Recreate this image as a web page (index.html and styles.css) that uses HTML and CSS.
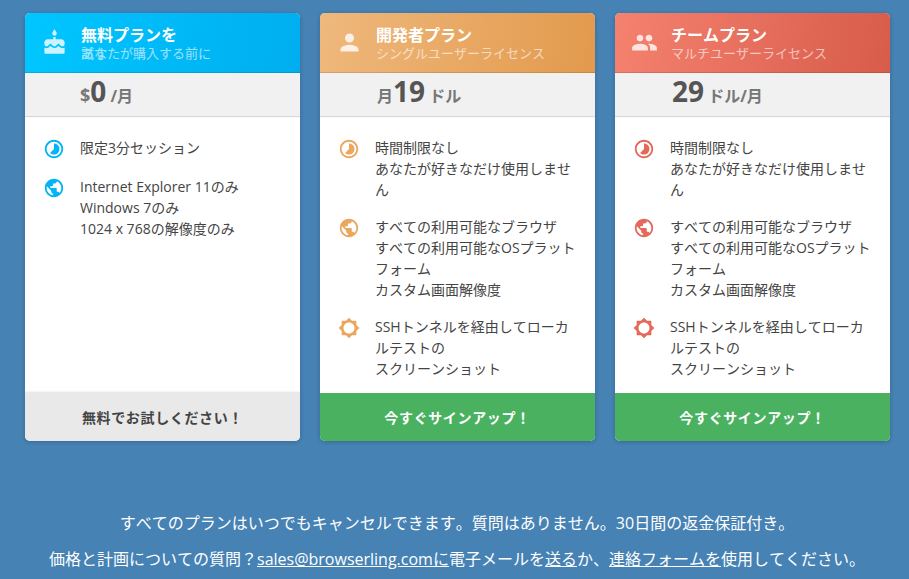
FILE: index.html
```html
<!DOCTYPE html>
<html lang="ja">
<head>
<meta charset="utf-8">
<title>Pricing</title>
<link rel="stylesheet" href="styles.css">
</head>
<body>
<main class="plans">
  <section class="card free">
    <header class="head">
      <svg class="head-icon" viewBox="0 0 24 24"><path d="M12 6c1.11 0 2-.9 2-2 0-.38-.1-.73-.29-1.03L12 0l-1.71 2.97c-.19.3-.29.65-.29 1.03 0 1.1.9 2 2 2zm4.6 9.99l-1.07-1.07-1.08 1.07c-1.3 1.3-3.58 1.31-4.89 0l-1.07-1.07-1.09 1.07C6.75 16.64 5.88 17 4.96 17c-.73 0-1.4-.23-1.96-.61V21c0 .55.45 1 1 1h16c.55 0 1-.45 1-1v-4.61c-.56.38-1.23.61-1.96.61-.92 0-1.79-.36-2.44-1.01zM18 9h-5V7h-2v2H6c-1.66 0-3 1.34-3 3v1.54c0 1.08.88 1.96 1.96 1.96.52 0 1.02-.2 1.38-.57l2.14-2.13 2.13 2.13c.74.74 2.03.74 2.77 0l2.14-2.13 2.13 2.13c.37.37.86.57 1.38.57 1.08 0 1.96-.88 1.96-1.96V12C21 10.34 19.66 9 18 9z"/></svg>
      <div class="head-text">
        <h2 class="title">無料プランを</h2>
        <p class="sub"><span class="over">試す</span>あなたが購入する前に</p>
      </div>
    </header>
    <div class="price"><span class="unit cur">$</span><b class="num">0</b> <span class="unit">/月</span></div>
    <ul class="features">
      <li class="feature">
        <svg class="feat-icon" viewBox="0 0 24 24"><path d="M16.24 7.76C15.07 6.59 13.54 6 12 6v6l-4.24 4.24c2.34 2.34 6.14 2.34 8.49 0 2.34-2.34 2.34-6.14-.01-8.48zM12 2C6.48 2 2 6.48 2 12s4.48 10 10 10 10-4.48 10-10S17.52 2 12 2zm0 18c-4.42 0-8-3.58-8-8s3.58-8 8-8 8 3.58 8 8-3.58 8-8 8z"/></svg>
        <div>限定3分セッション</div>
      </li>
      <li class="feature">
        <svg class="feat-icon" viewBox="0 0 24 24"><path d="M12 2C6.48 2 2 6.48 2 12s4.48 10 10 10 10-4.48 10-10S17.52 2 12 2zm-1 17.93c-3.95-.49-7-3.85-7-7.93 0-.62.08-1.21.21-1.79L9 15v1c0 1.1.9 2 2 2v1.93zm6.9-2.54c-.26-.81-1-1.39-1.9-1.39h-1v-3c0-.55-.45-1-1-1H8v-2h2c.55 0 1-.45 1-1V7h2c1.1 0 2-.9 2-2v-.41c2.93 1.19 5 4.06 5 7.41 0 2.08-.8 3.97-2.1 5.39z"/></svg>
        <div>Internet Explorer 11のみ<br>Windows 7のみ<br>1024 x 768の解像度のみ</div>
      </li>
    </ul>
    <a class="cta" href="#">無料でお試しください！</a>
  </section>

  <section class="card dev">
    <header class="head">
      <svg class="head-icon" viewBox="0 0 24 24"><path d="M12 12c2.21 0 4-1.79 4-4s-1.79-4-4-4-4 1.79-4 4 1.79 4 4 4zm0 2c-2.67 0-8 1.34-8 4v2h16v-2c0-2.66-5.33-4-8-4z"/></svg>
      <div class="head-text">
        <h2 class="title">開発者プラン</h2>
        <p class="sub">シングルユーザーライセンス</p>
      </div>
    </header>
    <div class="price"><span class="unit">月</span><b class="num">19</b> <span class="unit">ドル</span></div>
    <ul class="features">
      <li class="feature">
        <svg class="feat-icon" viewBox="0 0 24 24"><path d="M16.24 7.76C15.07 6.59 13.54 6 12 6v6l-4.24 4.24c2.34 2.34 6.14 2.34 8.49 0 2.34-2.34 2.34-6.14-.01-8.48zM12 2C6.48 2 2 6.48 2 12s4.48 10 10 10 10-4.48 10-10S17.52 2 12 2zm0 18c-4.42 0-8-3.58-8-8s3.58-8 8-8 8 3.58 8 8-3.58 8-8 8z"/></svg>
        <div>時間制限なし<br>あなたが好きなだけ使用しません</div>
      </li>
      <li class="feature">
        <svg class="feat-icon" viewBox="0 0 24 24"><path d="M12 2C6.48 2 2 6.48 2 12s4.48 10 10 10 10-4.48 10-10S17.52 2 12 2zm-1 17.93c-3.95-.49-7-3.85-7-7.93 0-.62.08-1.21.21-1.79L9 15v1c0 1.1.9 2 2 2v1.93zm6.9-2.54c-.26-.81-1-1.39-1.9-1.39h-1v-3c0-.55-.45-1-1-1H8v-2h2c.55 0 1-.45 1-1V7h2c1.1 0 2-.9 2-2v-.41c2.93 1.19 5 4.06 5 7.41 0 2.08-.8 3.97-2.1 5.39z"/></svg>
        <div>すべての利用可能なブラウザ<br>すべての利用可能なOSプラットフォーム<br>カスタム画面解像度</div>
      </li>
      <li class="feature">
        <svg class="feat-icon" viewBox="0 0 24 24"><path d="M20 15.31L23.31 12 20 8.69V4h-4.69L12 .69 8.69 4H4v4.69L.69 12 4 15.31V20h4.69L12 23.31 15.31 20H20v-4.69zM12 18c-3.31 0-6-2.69-6-6s2.69-6 6-6 6 2.69 6 6-2.69 6-6 6z"/></svg>
        <div>SSHトンネルを経由してローカルテストの<br>スクリーンショット</div>
      </li>
    </ul>
    <a class="cta" href="#">今すぐサインアップ！</a>
  </section>

  <section class="card team">
    <header class="head">
      <svg class="head-icon" viewBox="0 0 24 24"><path d="M16 11c1.66 0 2.99-1.34 2.99-3S17.66 5 16 5c-1.66 0-3 1.34-3 3s1.34 3 3 3zm-8 0c1.66 0 2.99-1.34 2.99-3S9.66 5 8 5C6.34 5 5 6.34 5 8s1.34 3 3 3zm0 2c-2.33 0-7 1.17-7 3.5V19h14v-2.5c0-2.33-4.67-3.5-7-3.5zm8 0c-.29 0-.62.02-.97.05 1.16.84 1.97 1.97 1.97 3.45V19h6v-2.5c0-2.33-4.67-3.5-7-3.5z"/></svg>
      <div class="head-text">
        <h2 class="title">チームプラン</h2>
        <p class="sub">マルチユーザーライセンス</p>
      </div>
    </header>
    <div class="price"><b class="num">29</b> <span class="unit">ドル/月</span></div>
    <ul class="features">
      <li class="feature">
        <svg class="feat-icon" viewBox="0 0 24 24"><path d="M16.24 7.76C15.07 6.59 13.54 6 12 6v6l-4.24 4.24c2.34 2.34 6.14 2.34 8.49 0 2.34-2.34 2.34-6.14-.01-8.48zM12 2C6.48 2 2 6.48 2 12s4.48 10 10 10 10-4.48 10-10S17.52 2 12 2zm0 18c-4.42 0-8-3.58-8-8s3.58-8 8-8 8 3.58 8 8-3.58 8-8 8z"/></svg>
        <div>時間制限なし<br>あなたが好きなだけ使用しません</div>
      </li>
      <li class="feature">
        <svg class="feat-icon" viewBox="0 0 24 24"><path d="M12 2C6.48 2 2 6.48 2 12s4.48 10 10 10 10-4.48 10-10S17.52 2 12 2zm-1 17.93c-3.95-.49-7-3.85-7-7.93 0-.62.08-1.21.21-1.79L9 15v1c0 1.1.9 2 2 2v1.93zm6.9-2.54c-.26-.81-1-1.39-1.9-1.39h-1v-3c0-.55-.45-1-1-1H8v-2h2c.55 0 1-.45 1-1V7h2c1.1 0 2-.9 2-2v-.41c2.93 1.19 5 4.06 5 7.41 0 2.08-.8 3.97-2.1 5.39z"/></svg>
        <div>すべての利用可能なブラウザ<br>すべての利用可能なOSプラットフォーム<br>カスタム画面解像度</div>
      </li>
      <li class="feature">
        <svg class="feat-icon" viewBox="0 0 24 24"><path d="M20 15.31L23.31 12 20 8.69V4h-4.69L12 .69 8.69 4H4v4.69L.69 12 4 15.31V20h4.69L12 23.31 15.31 20H20v-4.69zM12 18c-3.31 0-6-2.69-6-6s2.69-6 6-6 6 2.69 6 6-2.69 6-6 6z"/></svg>
        <div>SSHトンネルを経由してローカルテストの<br>スクリーンショット</div>
      </li>
    </ul>
    <a class="cta" href="#">今すぐサインアップ！</a>
  </section>
</main>
<footer class="notes">
  <p class="note">すべてのプランはいつでもキャンセルできます。質問はありません。30日間の返金保証付き。</p>
  <p class="note">価格と計画についての質問？<a href="#">sales@browserling.comに</a>電子メールを<a href="#">送る</a>か、<a href="#">連絡フォームを</a>使用してください。</p>
</footer>
</body>
</html>
```
FILE: styles.css
```css
* { box-sizing: border-box; }
html, body { height: 100%; }
body {
  margin: 0;
  padding: 13px 19px 0 25px;
  background: #4682b4;
  font-family: "Open Sans", "Noto Sans CJK JP", sans-serif;
  font-kerning: none;
  color: #444;
  overflow: hidden;
}
.plans {
  display: grid;
  grid-template-columns: repeat(3, 275px);
  column-gap: 20px;
}
.card {
  display: flex;
  flex-direction: column;
  height: 428px;
  background: #fff;
  border-radius: 5px;
  overflow: hidden;
  box-shadow: 0 1px 4px rgba(0, 0, 0, .2);
}
.head {
  display: flex;
  flex: none;
  align-items: center;
  height: 60px;
  padding-left: 16px;
  color: #fff;
  border-bottom: 1px solid rgba(0, 0, 0, .12);
}
.free .head { background: linear-gradient(100deg, #00c6ff, #00aeef); }
.dev .head { background: linear-gradient(100deg, #efb87c, #e29a4d); }
.team .head { background: linear-gradient(100deg, #f5816f, #d85c4a); }
.head-icon { width: 27px; height: 27px; fill: #fff; opacity: .8; flex: none; }
.head-text { margin-left: 13px; padding-top: 1px; }
.title { margin: 0; font-size: 16px; line-height: 20px; font-weight: 700; }
.sub { margin: 0; font-size: 13px; line-height: 16px; opacity: .6; }
.over { display: inline-block; width: 26px; margin-right: -26px; }
.price {
  flex: none;
  height: 43px;
  padding-left: 57px;
  line-height: 36px;
  background: #f1f1f1;
  box-shadow: 0 1px 1px rgba(0, 0, 0, .15);
  position: relative;
  white-space: nowrap;
}
.num { font-size: 28px; font-weight: 700; color: #555; }
.unit { font-size: 16px; font-weight: 700; color: #777; }
.cur { font-size: 18px; }
.free .price { padding-left: 55px; }
.features {
  flex: 1;
  list-style: none;
  margin: 0;
  padding: 21px 15px 0 18px;
  font-size: 14px;
  line-height: 21px;
}
.feature { display: flex; margin-bottom: 16px; }
.feature:last-child { margin-bottom: 0; }
.feat-icon { width: 22px; height: 22px; flex: none; margin: 1px 15px 0 0; }
.free .feat-icon { fill: #00b4f5; }
.dev .feat-icon { fill: #eba75e; }
.team .feat-icon { fill: #e4695a; }
.cta {
  display: block;
  flex: none;
  height: 48px;
  line-height: 50px;
  text-align: center;
  font-size: 14px;
  font-weight: 700;
  letter-spacing: .65px;
  text-decoration: none;
  color: #fff;
  background: #4ab161;
}
.free .cta {
  color: #444;
  background: #e9e9e9;
  box-shadow: 0 -1px 2px rgba(0, 0, 0, .12);
}
.notes { margin: 71px -19px 0 -25px; padding-left: 5px; text-align: center; color: #fff; font-size: 16px; line-height: 22px; }
.note { margin: 0 0 14px; }
.note a { color: #fff; }
```
